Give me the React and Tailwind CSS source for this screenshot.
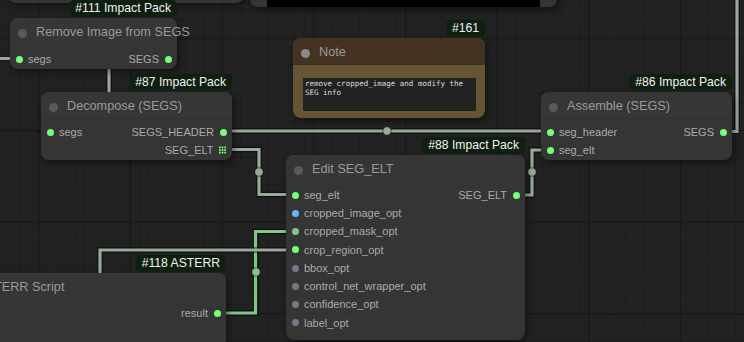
import React from "react";

const F = "font-['Liberation_Sans',Arial,sans-serif]";

function Badge({ text }) {
  return (
    <div className={`absolute right-0 bottom-full mb-px h-[17px] px-[6px] rounded-[5px] bg-[#0f1f10] text-[#f2f2f2] text-[12.2px] leading-[17px] whitespace-nowrap ${F}`}>
      {text}
    </div>
  );
}

function Node({ pos, title, badge, titleBg = "bg-[#363636]", bodyBg = "bg-[#353535]", dot = "bg-[#5a5a5a]", bodyClass = "pt-[4px]", children }) {
  return (
    <div className={`absolute ${pos}`}>
      {badge && <Badge text={badge} />}
      <div className={`h-full rounded-[8px] flex flex-col shadow-[2px_3px_6px_rgba(0,0,0,0.45)] ${bodyBg}`}>
        <div className={`h-[27px] shrink-0 flex items-center pt-[4px] rounded-t-[8px] border-b border-[#2f2f2f]/60 ${titleBg}`}>
          <span className={`ml-[7.5px] w-[9px] h-[9px] rounded-full shrink-0 ${dot}`} />
          <span className={`ml-[9.5px] text-[12.7px] text-[#9a9a9a] whitespace-nowrap ${F}`}>{title}</span>
        </div>
        <div className={`flex-1 flex flex-col ${bodyClass}`}>{children}</div>
      </div>
    </div>
  );
}

function Row({ inLabel, inDot, outLabel, outDot, grid, h = "h-[18px]" }) {
  return (
    <div className={`${h} shrink-0 flex items-center justify-between px-[5.5px] text-[11px] text-[#aaaaaa] ${F}`}>
      <div className="flex items-center gap-[5.5px]">
        {inLabel && <span className={`w-[7px] h-[7px] rounded-full ${inDot}`} />}
        {inLabel && <span className="whitespace-nowrap">{inLabel}</span>}
      </div>
      <div className="flex items-center gap-[5.5px]">
        {outLabel && <span className="whitespace-nowrap">{outLabel}</span>}
        {outLabel && !grid && <span className={`w-[7px] h-[7px] rounded-full ${outDot}`} />}
        {outLabel && grid && (
          <svg width="7" height="8" viewBox="0 0 8 8" className="mr-[0.5px]">
            {[0, 3, 6].map((x) =>
              [0, 3, 6].map((y) => <rect key={x + "-" + y} x={x} y={y} width="2" height="2" fill="#77ff77" />)
            )}
          </svg>
        )}
      </div>
    </div>
  );
}

const G = "bg-[#77ff77]";
const UN = "bg-[#777788]";

function Wire({ d, color = "#99aa99" }) {
  return (
    <g>
      <path d={d} fill="none" stroke="rgba(0,0,0,0.55)" strokeWidth="5.5" />
      <path d={d} fill="none" stroke={color} strokeWidth="3.2" />
    </g>
  );
}
function Mid({ x, y, color = "#99aa99" }) {
  return <circle cx={x} cy={y} r="4.2" fill={color} stroke="rgba(0,0,0,0.5)" strokeWidth="1" />;
}

export default function App() {
  return (
    <div className="relative w-[744px] h-[342px] overflow-hidden bg-[#222222]">
      <svg className="absolute inset-0" width="744" height="342">
        <defs>
          <pattern id="minor" width="9.17" height="9.17" patternUnits="userSpaceOnUse" x="1.5" y="1.5">
            <rect width="1" height="9.17" fill="#1d1d1d" />
            <rect width="9.17" height="1" fill="#1d1d1d" />
          </pattern>
          <pattern id="major" width="91.7" height="91.7" patternUnits="userSpaceOnUse" x="38" y="38">
            <rect width="1.3" height="91.7" fill="#191919" />
            <rect width="91.7" height="1.3" fill="#191919" />
          </pattern>
        </defs>
        <rect width="744" height="342" fill="url(#minor)" />
        <rect width="744" height="342" fill="url(#major)" />

        <Wire d="M-5 58.5 H16" />
        <Wire d="M169 59 H109 V131.5 H60" />
        <circle cx="178.5" cy="59" r="1.6" fill="#151515" />
        <circle cx="39" cy="132" r="1.6" fill="#151515" />
        <Wire d="M223 131 H549" />
        <Mid x={387} y={131} />
        <Wire d="M223 149.5 H259 V194.5 H294" />
        <Mid x={259} y={172} />
        <Wire d="M516 195 H532 V150 H549" />
        <Mid x={532} y={172} />
        <Wire d="M723 131.5 H737 V-10" />
        <Wire d="M217 313 H255.5 V231.5 H294" color="#81c784" />
        <Mid x={256} y={272} color="#81c784" />
        <Wire d="M100 360 V250 H294" />
      </svg>

      {/* top partial nodes */}
      <div className="absolute left-[8px] top-[-60px] w-[236px] h-[63px] rounded-[8px] bg-[#353535] shadow-[2px_3px_6px_rgba(0,0,0,0.45)]" />
      <div className="absolute left-[250px] top-[-60px] w-[307px] h-[67px] rounded-[8px] bg-[#353535] px-[17px] flex flex-col shadow-[2px_3px_6px_rgba(0,0,0,0.45)]">
        <div className="flex-1 bg-black" />
      </div>

      <Node pos="left-[10px] top-[18px] w-[167px] h-[51px]" title="Remove Image from SEGS" badge="#111 Impact Pack" bodyClass="pt-[5px]">
        <Row inLabel="segs" inDot={G} outLabel="SEGS" outDot={G} />
      </Node>

      <Node pos="left-[41px] top-[92px] w-[191px] h-[68px]" title="Decompose (SEGS)" badge="#87 Impact Pack">
        <Row inLabel="segs" inDot={G} outLabel="SEGS_HEADER" outDot={G} />
        <Row outLabel="SEG_ELT" grid />
      </Node>

      <Node pos="left-[541px] top-[92px] w-[191px] h-[68px]" title="Assemble (SEGS)" badge="#86 Impact Pack">
        <Row inLabel="seg_header" inDot={G} outLabel="SEGS" outDot={G} />
        <Row inLabel="seg_elt" inDot={G} />
      </Node>

      <Node
        pos="left-[293px] top-[38px] w-[192px] h-[80px]"
        title="Note"
        badge="#161"
        titleBg="bg-[#443322]"
        bodyBg="bg-[#665533]"
        dot="bg-[#8a8a8a]"
        bodyClass="pt-[13px] pb-[7px] pl-[10px] pr-[9px]"
      >
        <div className="flex-1 bg-[#222222] px-[2px] pt-[1px] text-[7.5px] leading-[9.3px] text-[#dddddd] font-['DejaVu_Sans_Mono',monospace]">
          remove cropped_image and modify the SEG info
        </div>
      </Node>

      <Node pos="left-[286px] top-[155px] w-[239px] h-[185px]" title="Edit SEG_ELT" badge="#88 Impact Pack">
        <Row h="h-[18.25px]" inLabel="seg_elt" inDot={G} outLabel="SEG_ELT" outDot={G} />
        <Row h="h-[18.25px]" inLabel="cropped_image_opt" inDot="bg-[#64b5f6]" />
        <Row h="h-[18.25px]" inLabel="cropped_mask_opt" inDot="bg-[#81c784]" />
        <Row h="h-[18.25px]" inLabel="crop_region_opt" inDot={G} />
        <Row h="h-[18.25px]" inLabel="bbox_opt" inDot={UN} />
        <Row h="h-[18.25px]" inLabel="control_net_wrapper_opt" inDot={UN} />
        <Row h="h-[18.25px]" inLabel="confidence_opt" inDot={UN} />
        <Row h="h-[18.25px]" inLabel="label_opt" inDot={UN} />
      </Node>

      <Node pos="left-[-49px] top-[273px] w-[275px] h-[100px]" title="ASTERR Script" badge="#118 ASTERR">
        <Row outLabel="result" outDot={G} />
      </Node>
    </div>
  );
}
